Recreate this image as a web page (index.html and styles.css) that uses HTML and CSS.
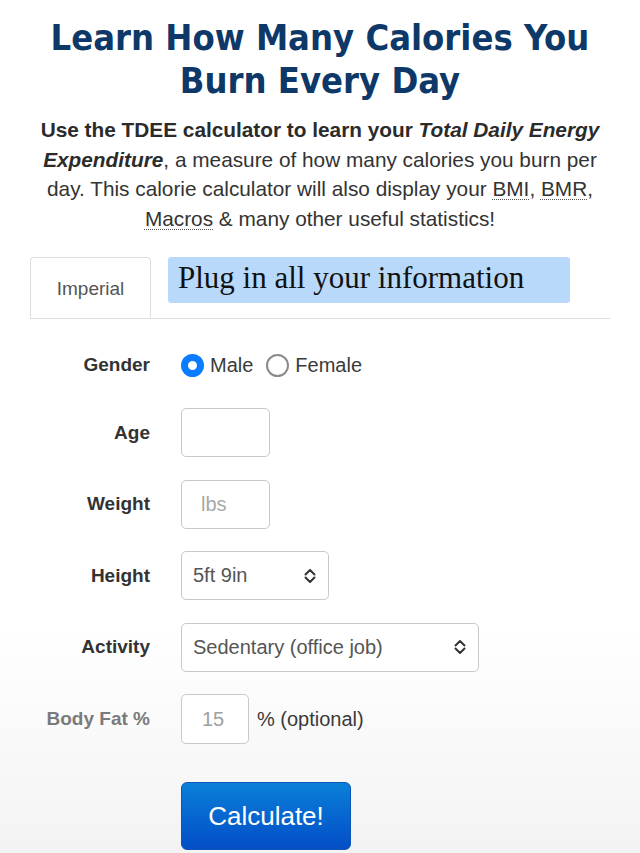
FILE: index.html
```html
<!DOCTYPE html>
<html lang="en">
<head>
<meta charset="utf-8">
<title>TDEE Calculator</title>
<link rel="stylesheet" href="styles.css">
</head>
<body>
<main class="page">
  <h1 class="title">Learn How Many Calories You Burn Every Day</h1>
  <p class="intro"><b>Use the TDEE calculator to learn your <i>Total Daily Energy Expenditure</i></b>, a measure of how many calories you burn per day. This calorie calculator will also display your <span class="dotted">BMI</span>, <span class="dotted">BMR</span>, <span class="dotted">Macros</span> &amp; many other useful statistics!</p>

  <div class="tabs">
    <div class="tab">Imperial</div>
    <div class="note">Plug in all your information</div>
  </div>

  <form class="form">
    <div class="row row-gender">
      <span class="label">Gender</span>
      <div class="radios">
        <span class="radio checked"></span><span class="radio-text">Male</span>
        <span class="radio"></span><span class="radio-text">Female</span>
      </div>
    </div>
    <div class="row">
      <span class="label">Age</span>
      <div class="field w-age"></div>
    </div>
    <div class="row">
      <span class="label">Weight</span>
      <div class="field w-age"><span class="placeholder">lbs</span></div>
    </div>
    <div class="row">
      <span class="label">Height</span>
      <div class="field select w-height"><span>5ft 9in</span>
        <svg class="chev" width="14" height="16" viewBox="0 0 14 16"><path d="M2.5 6.5 L7 2 L11.5 6.5 M2.5 9.5 L7 14 L11.5 9.5" fill="none" stroke="#333" stroke-width="2" stroke-linecap="round" stroke-linejoin="round"/></svg>
      </div>
    </div>
    <div class="row">
      <span class="label">Activity</span>
      <div class="field select w-activity"><span>Sedentary (office job)</span>
        <svg class="chev" width="14" height="16" viewBox="0 0 14 16"><path d="M2.5 6.5 L7 2 L11.5 6.5 M2.5 9.5 L7 14 L11.5 9.5" fill="none" stroke="#333" stroke-width="2" stroke-linecap="round" stroke-linejoin="round"/></svg>
      </div>
    </div>
    <div class="row row-fat">
      <span class="label muted">Body Fat %</span>
      <div class="fat">
        <div class="field w-fat"><span class="value-gray">15</span></div>
        <span class="optional">% (optional)</span>
      </div>
    </div>
    <div class="row row-btn">
      <span class="label"></span>
      <div class="button">Calculate!</div>
    </div>
  </form>
</main>
</body>
</html>
```

FILE: styles.css
```css
html, body {
  margin: 0;
  padding: 0;
}
body {
  width: 640px;
  height: 853px;
  overflow: hidden;
  background: linear-gradient(to bottom, #ffffff 0%, #ffffff 74%, #f3f3f3 100%);
  font-family: "Liberation Sans", Arial, sans-serif;
  color: #333;
}
.page {
  padding: 16px 30px 0 30px;
}
.title {
  margin: 0 auto;
  font-family: "DejaVu Sans", sans-serif;
  font-stretch: condensed;
  font-weight: bold;
  font-size: 36px;
  line-height: 43px;
  color: #0d3868;
  text-align: center;
  width: 560px;
}
.intro {
  margin: 13px -4px 0 -4px;
  font-size: 20.8px;
  line-height: 29.5px;
  text-align: center;
  color: #333;
}
.intro b { color: #2b2b2b; }
.dotted {
  text-decoration: underline dotted #555;
  text-decoration-thickness: 1px;
  text-underline-offset: 3px;
}
.tabs {
  margin-top: 24px;
  display: flex;
  align-items: flex-start;
  border-bottom: 1px solid #ddd;
  height: 61px;
}
.tab {
  width: 121px;
  height: 61px;
  box-sizing: border-box;
  border: 1px solid #ddd;
  border-bottom: 1px solid #fff;
  border-radius: 4px 4px 0 0;
  background: #fff;
  text-align: center;
  font-size: 19px;
  line-height: 62px;
  color: #555;
  margin-bottom: -1px;
}
.note {
  margin-left: 17px;
  width: 402px;
  height: 46px;
  box-sizing: border-box;
  background: #b9d9fb;
  border-radius: 3px;
  padding-left: 10px;
  font-family: "Liberation Serif", "Times New Roman", serif;
  font-size: 31px;
  line-height: 42px;
  color: #111;
}
.form {
  margin-top: 34px;
  display: flex;
  flex-direction: column;
  gap: 22.5px;
}
.row {
  display: grid;
  grid-template-columns: 120px auto;
  column-gap: 31px;
  align-items: center;
}
.row-gender {
  height: 24px;
  margin-bottom: 8.5px;
}
.label {
  text-align: right;
  font-weight: bold;
  font-size: 19px;
  color: #333;
}
.label.muted { color: #7a7a7a; }
.radios {
  display: flex;
  align-items: center;
}
.radio {
  width: 23px;
  height: 23px;
  box-sizing: border-box;
  border-radius: 50%;
  border: 2px solid #8a8a8a;
  background: #fff;
}
.radio.checked {
  border: 7px solid #0a7cff;
}
.radio-text {
  font-size: 20px;
  color: #3a3a3a;
  margin-left: 6px;
  margin-right: 13px;
}
.field {
  height: 49px;
  box-sizing: border-box;
  border: 1px solid #c9c9c9;
  border-radius: 5px;
  background: #fff;
  display: flex;
  align-items: center;
  font-size: 20px;
  color: #555;
}
.w-age { width: 89px; }
.w-height { width: 148px; }
.w-activity { width: 298px; }
.w-fat { width: 68px; height: 50px; }
.placeholder {
  color: #a8a8a8;
  padding-left: 19px;
}
.value-gray {
  color: #a0a0a0;
  padding-left: 20px;
}
.select {
  padding-left: 11px;
  padding-right: 11px;
  justify-content: space-between;
}
.chev { display: block; }
.fat {
  display: flex;
  align-items: center;
}
.optional {
  margin-left: 8px;
  font-size: 20px;
  color: #3a3a3a;
}
.row-btn {
  margin-top: 15px;
}
.button {
  width: 170px;
  height: 68px;
  box-sizing: border-box;
  border-radius: 6px;
  background: linear-gradient(to bottom, #0b80d8 0%, #0666d0 50%, #044ec6 100%);
  border: 1px solid #0a56b8;
  color: #fff;
  font-size: 26px;
  text-align: center;
  line-height: 66px;
}
```
